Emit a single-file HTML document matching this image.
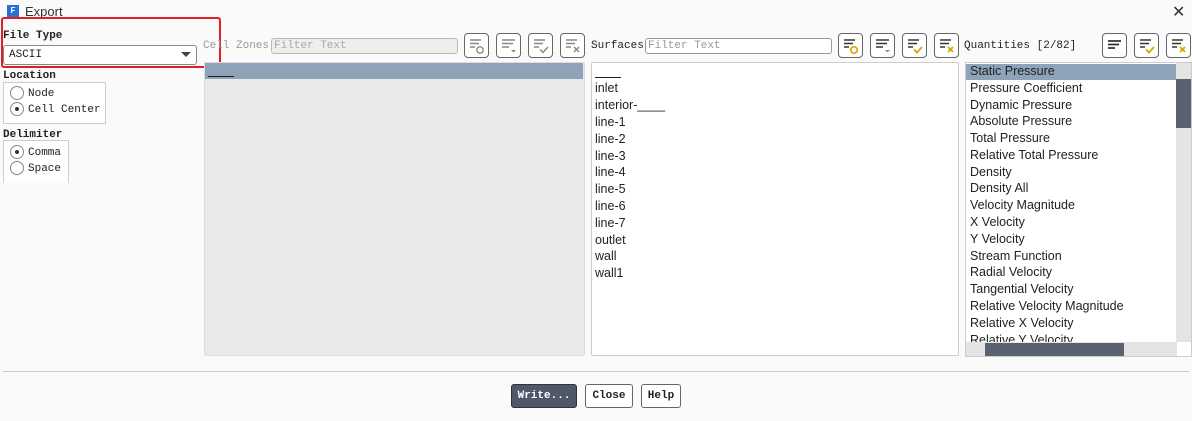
<!DOCTYPE html><html><head><style>
body{margin:0;width:1192px;height:421px;background:#fafafa;position:relative;overflow:hidden;font-family:"Liberation Sans","Noto Sans CJK SC",sans-serif}
.a{position:absolute}
.m{font-family:"Liberation Mono","Noto Serif CJK SC",monospace;font-size:11px;color:#222}
.ib{position:absolute;width:23px;height:23px;border:1px solid #666;border-radius:4px;background:#fff;top:33px}
.ib svg{position:absolute;left:0;top:0}
.li{position:absolute;font-size:12.5px;color:#222;left:4px}
.rad{position:absolute;width:12px;height:12px;border:1px solid #888;border-radius:50%;background:#fff}
.rad.on:after{content:"";position:absolute;left:4px;top:4px;width:4px;height:4px;border-radius:50%;background:#333}
</style></head><body>
<div class="a" style="left:7px;top:5px;width:12px;height:12px;background:#2a6fd6;color:#fff;font-size:8px;font-weight:bold;text-align:center;line-height:12px">F</div>
<div class="a" style="left:25px;top:4px;font-size:13px;color:#333">Export</div>
<div class="a" style="left:1172px;top:2px;font-size:16px;color:#333">✕</div>
<div class="a" style="left:1px;top:17px;width:216px;height:47px;border:2px solid #e02020;border-radius:3px"></div>
<div class="a m" style="left:3px;top:30px;font-weight:bold">File Type</div>
<div class="a" style="left:3px;top:45px;width:192px;height:18px;border:1px solid #888;border-radius:3px;background:#fff"></div>
<div class="a m" style="left:9px;top:49px">ASCII</div>
<div class="a" style="left:181px;top:52px;border-left:5px solid transparent;border-right:5px solid transparent;border-top:5px solid #444"></div>
<div class="a m" style="left:3px;top:70px;font-weight:bold">Location</div>
<div class="a" style="left:3px;top:82px;width:101px;height:40px;border:1px solid #ccc;background:#fff"></div>
<div class="rad" style="left:10px;top:86px"></div><div class="a m" style="left:28px;top:88px">Node</div>
<div class="rad on" style="left:10px;top:102px"></div><div class="a m" style="left:28px;top:104px">Cell Center</div>
<div class="a m" style="left:3px;top:129px;font-weight:bold">Delimiter</div>
<div class="a" style="left:3px;top:140px;width:64px;height:42px;border:1px solid #ccc;border-bottom:none;background:#fff"></div>
<div class="rad on" style="left:10px;top:145px"></div><div class="a m" style="left:28px;top:147px">Comma</div>
<div class="rad" style="left:10px;top:161px"></div><div class="a m" style="left:28px;top:163px">Space</div>

<div class="a m" style="left:203px;top:40px;color:#999">Cell Zones</div>
<div class="a" style="left:271px;top:38px;width:185px;height:14px;border:1px solid #bbb;border-radius:3px;background:#eee"></div>
<div class="a m" style="left:274px;top:40px;color:#aaa">Filter Text</div>
<div class="a" style="left:204px;top:62px;width:379px;height:292px;background:#e9e9e9;border:1px solid #ddd;border-radius:2px"></div>
<div class="a" style="left:205px;top:63px;width:378px;height:16px;background:#8fa3b8"></div>
<div class="a" style="left:208px;top:76px;width:26px;height:1px;background:#222"></div>

<div class="a m" style="left:591px;top:40px">Surfaces</div>
<div class="a" style="left:645px;top:38px;width:185px;height:14px;border:1px solid #999;border-radius:3px;background:#fff"></div>
<div class="a m" style="left:648px;top:40px;color:#999">Filter Text</div>
<div class="a" style="left:591px;top:62px;width:366px;height:292px;background:#fff;border:1px solid #ccc;border-radius:2px"></div>
<div class="a" style="left:595px;top:77px;width:26px;height:1px;background:#222"></div>
<div class="a" style="left:591px;top:63px;width:366px">
<div class="li" style="top:18px">inlet</div><div class="li" style="top:35px">interior-____</div><div class="li" style="top:52px">line-1</div><div class="li" style="top:69px">line-2</div><div class="li" style="top:86px">line-3</div><div class="li" style="top:102px">line-4</div><div class="li" style="top:119px">line-5</div><div class="li" style="top:136px">line-6</div><div class="li" style="top:153px">line-7</div><div class="li" style="top:170px">outlet</div><div class="li" style="top:186px">wall</div><div class="li" style="top:203px">wall1</div></div>

<div class="a m" style="left:964px;top:40px">Quantities [2/82]</div>
<div class="a" style="left:965px;top:62px;width:225px;height:293px;background:#fff;border:1px solid #ccc;overflow:hidden">
<div class="a" style="left:0;top:1px;width:211px;height:16px;background:#8fa3b8"></div>
<div class="li" style="top:1px">Static Pressure</div><div class="li" style="top:18px">Pressure Coefficient</div><div class="li" style="top:35px">Dynamic Pressure</div><div class="li" style="top:51px">Absolute Pressure</div><div class="li" style="top:68px">Total Pressure</div><div class="li" style="top:85px">Relative Total Pressure</div><div class="li" style="top:102px">Density</div><div class="li" style="top:118px">Density All</div><div class="li" style="top:135px">Velocity Magnitude</div><div class="li" style="top:152px">X Velocity</div><div class="li" style="top:169px">Y Velocity</div><div class="li" style="top:186px">Stream Function</div><div class="li" style="top:202px">Radial Velocity</div><div class="li" style="top:219px">Tangential Velocity</div><div class="li" style="top:236px">Relative Velocity Magnitude</div><div class="li" style="top:253px">Relative X Velocity</div><div class="li" style="top:270px">Relative Y Velocity</div>
<div class="a" style="left:210px;top:0;width:15px;height:280px;background:#e4e4e4"></div>
<div class="a" style="left:210px;top:16px;width:15px;height:49px;background:#5a6170"></div>
<div class="a" style="left:0;top:279px;width:211px;height:14px;background:#e4e4e4"></div>
<div class="a" style="left:19px;top:280px;width:139px;height:13px;background:#5a6170"></div>
<div class="a" style="left:211px;top:279px;width:14px;height:14px;background:#fff"></div>
</div>

<div class="a" style="left:3px;top:371px;width:1186px;height:1px;background:#ccc"></div>
<div class="a m" style="left:511px;top:384px;width:64px;height:22px;background:#4f5868;border:1px solid #333;border-radius:3px;color:#fff;font-weight:bold;text-align:center;line-height:22px">Write...</div>
<div class="a m" style="left:585px;top:384px;width:46px;height:22px;background:#fff;border:1px solid #666;border-radius:3px;text-align:center;line-height:22px;font-weight:bold">Close</div>
<div class="a m" style="left:641px;top:384px;width:38px;height:22px;background:#fff;border:1px solid #666;border-radius:3px;text-align:center;line-height:22px;font-weight:bold">Help</div>

<div class="ib" style="left:464px"><svg width="23" height="23"><path d="M5 6h11M5 9.5h9M5 13h5" stroke="#888" stroke-width="1.6"/><circle cx="15" cy="16" r="3.2" fill="none" stroke="#888" stroke-width="1.4"/></svg></div>
<div class="ib" style="left:496px"><svg width="23" height="23"><path d="M5 6h13M5 9.5h11M5 13h7" stroke="#888" stroke-width="1.6"/><path d="M14 16h5l-2.5 2.5z" fill="#888"/></svg></div>
<div class="ib" style="left:528px"><svg width="23" height="23"><path d="M5 6h11M5 9.5h9M5 13h5" stroke="#888" stroke-width="1.6"/><path d="M11 15.5l3 3 5-5.5" stroke="#888" stroke-width="1.4" fill="none"/></svg></div>
<div class="ib" style="left:560px"><svg width="23" height="23"><path d="M5 6h11M5 9.5h9M5 13h5" stroke="#888" stroke-width="1.6"/><path d="M13 13l5 5M18 13l-5 5" stroke="#888" stroke-width="1.4"/></svg></div>
<div class="ib" style="left:838px"><svg width="23" height="23"><path d="M5 6h11M5 9.5h9M5 13h5" stroke="#333" stroke-width="1.6"/><circle cx="15" cy="16" r="3.2" fill="none" stroke="#d9a300" stroke-width="1.6"/></svg></div>
<div class="ib" style="left:870px"><svg width="23" height="23"><path d="M5 6h13M5 9.5h11M5 13h7" stroke="#333" stroke-width="1.6"/><path d="M14 16h5l-2.5 2.5z" fill="#888"/></svg></div>
<div class="ib" style="left:902px"><svg width="23" height="23"><path d="M5 6h11M5 9.5h9M5 13h5" stroke="#333" stroke-width="1.6"/><path d="M11 15.5l3 3 5-5.5" stroke="#d9a300" stroke-width="1.7" fill="none"/></svg></div>
<div class="ib" style="left:934px"><svg width="23" height="23"><path d="M5 6h11M5 9.5h9M5 13h5" stroke="#333" stroke-width="1.6"/><path d="M13 13l5 5M18 13l-5 5" stroke="#d9a300" stroke-width="1.7"/></svg></div>
<div class="ib" style="left:1102px"><svg width="23" height="23"><path d="M5 7h13M5 10.5h11M5 14h7" stroke="#333" stroke-width="1.7"/></svg></div>
<div class="ib" style="left:1134px"><svg width="23" height="23"><path d="M5 6h11M5 9.5h9M5 13h5" stroke="#333" stroke-width="1.6"/><path d="M11 15.5l3 3 5-5.5" stroke="#d9a300" stroke-width="1.7" fill="none"/></svg></div>
<div class="ib" style="left:1166px"><svg width="23" height="23"><path d="M5 6h11M5 9.5h9M5 13h5" stroke="#333" stroke-width="1.6"/><path d="M13 13l5 5M18 13l-5 5" stroke="#d9a300" stroke-width="1.7"/></svg></div>
</body></html>
